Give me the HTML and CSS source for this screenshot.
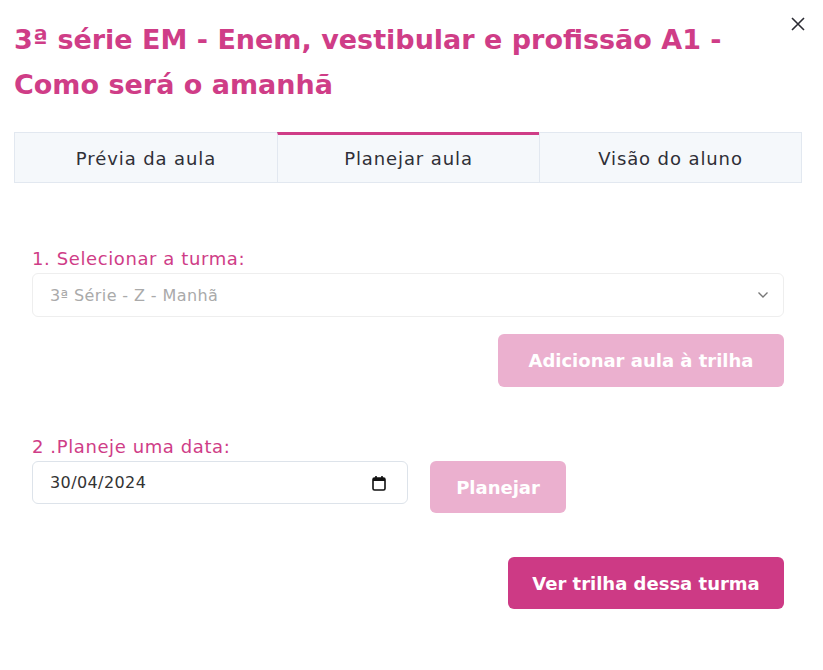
FILE: index.html
```html
<!DOCTYPE html>
<html lang="pt-BR">
<head>
<meta charset="utf-8">
<link rel="stylesheet" href="styles.css">
</head>
<body>
<div class="modal">
  <button class="close" aria-label="Fechar">
    <svg width="16" height="16" viewBox="0 0 16 16"><path d="M2 2 L14 14 M14 2 L2 14" stroke="#2b2b33" stroke-width="1.6" fill="none"/></svg>
  </button>
  <h1 class="title">3ª série EM - Enem, vestibular e profissão A1 - Como será o amanhã</h1>
  <div class="tabs">
    <div class="tab">Prévia da aula</div>
    <div class="tab active">Planejar aula</div>
    <div class="tab">Visão do aluno</div>
  </div>
  <div class="content">
    <div class="field">
      <label class="label">1. Selecionar a turma:</label>
      <div class="select">
        <span>3ª Série - Z - Manhã</span>
        <svg width="12" height="8" viewBox="0 0 12 8"><path d="M1.5 1.5 L6 6 L10.5 1.5" stroke="#777" stroke-width="1.4" fill="none"/></svg>
      </div>
    </div>
    <div class="row-end">
      <button class="btn btn-light btn-add">Adicionar aula à trilha</button>
    </div>
    <div class="field field-date">
      <label class="label">2 .Planeje uma data:</label>
      <div class="date-row">
        <div class="date">
          <span>30/04/2024</span>
          <svg width="14" height="16" viewBox="0 0 14 16"><rect x="1" y="3" width="12" height="12" rx="1.5" fill="none" stroke="#111" stroke-width="1.6"/><rect x="1" y="3" width="12" height="3" fill="#111"/><path d="M4 1 V4 M10 1 V4" stroke="#111" stroke-width="1.6"/></svg>
        </div>
        <button class="btn btn-light btn-plan">Planejar</button>
      </div>
    </div>
    <div class="row-end">
      <button class="btn btn-dark btn-view">Ver trilha dessa turma</button>
    </div>
  </div>
</div>
</body>
</html>
```
FILE: styles.css
```css
* { box-sizing: border-box; }
html, body { margin: 0; background: #fff; }
body { font-family: "DejaVu Sans", "Open Sans", sans-serif; color: #333; }
.modal { position: relative; padding: 17px 21px 0 14px; width: 823px; height: 670px; }
.close { position: absolute; top: 16px; right: 17px; background: none; border: 0; padding: 0; width: 16px; height: 16px; cursor: pointer; }
.close svg { display: block; }
.title { margin: 0; font-size: 27px; line-height: 45px; font-weight: 700; color: #cf3d87; padding-right: 50px; }
.tabs { display: grid; grid-template-columns: 1fr 1fr 1fr; margin-top: 25px; border: 1px solid #e2e8f0; background: #f5f8fb; height: 51px; }
.tab { display: flex; align-items: center; justify-content: center; font-size: 18px; letter-spacing: 0.9px; color: #2f2f37; border-left: 1px solid #e2e8f0; padding-top: 2px; }
.tab:first-child { border-left: 0; }
.tab.active { border-top: 3px solid #cf3d87; margin-top: -1px; padding-top: 0; }
.content { padding: 0 18px; }
.field { margin-top: 64px; }
.label { display: block; font-size: 18px; line-height: 24px; letter-spacing: 0.6px; color: #cf3d87; }
.select { margin-top: 2px; height: 44px; border: 1px solid #eeeeee; border-radius: 6px; display: flex; align-items: center; justify-content: space-between; padding: 0 14px 0 17px; font-size: 16px; letter-spacing: 0.4px; color: #aaaaaa; }
.row-end { display: flex; justify-content: flex-end; }
.btn { border: 0; border-radius: 6px; color: #fff; font-family: inherit; font-weight: 700; font-size: 18px; cursor: pointer; }
.btn-light { background: #ebb0cf; }
.btn-dark { background: #cd3a85; }
.btn-add { margin-top: 17px; width: 286px; height: 53px; }
.field-date { margin-top: 48px; }
.date-row { display: flex; gap: 22px; margin-top: 2px; }
.date { width: 376px; height: 43px; border: 1px solid #dde3ea; border-radius: 6px; display: flex; align-items: center; justify-content: space-between; padding: 0 21px 0 17px; font-size: 16px; letter-spacing: 0.4px; color: #333; }
.date svg { display: block; }
.btn-plan { width: 136px; height: 52px; }
.btn-view { margin-top: 44px; width: 276px; height: 52px; }
```
